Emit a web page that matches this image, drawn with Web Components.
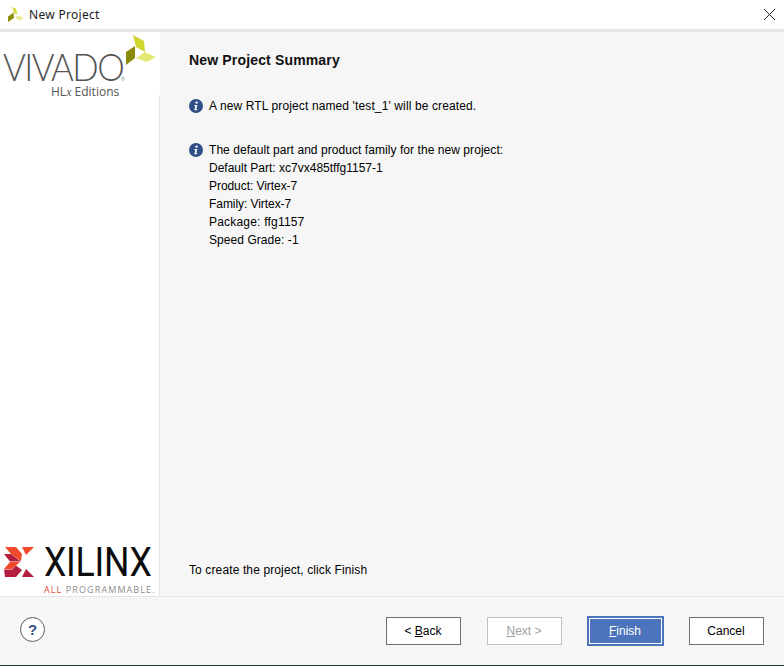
<!DOCTYPE html>
<html>
<head>
<meta charset="utf-8">
<title>New Project</title>
<style>
    html, body { margin: 0; height: 100%; }
    body {
        width: 784px;
        height: 666px;
        overflow: hidden;
        font-family: "Liberation Sans", Arial, sans-serif;
        font-size: 12px;
        color: #000;
        display: flex;
        flex-direction: column;
    }
    .w1 { letter-spacing: .12px; }
    .w2 { letter-spacing: .06px; }
    .w3 { letter-spacing: .2px; }
    .w4 { letter-spacing: -.06px; }
</style>
</head>
<body>
<project-dialog>
    <title-bar slot="title">New Project</title-bar>
    <side-panel slot="side"></side-panel>
    <summary-page slot="main" heading="New Project Summary">
        <info-note><span class="w1">A new RTL project named 'test_1' will be created.</span></info-note>
        <info-note>
            <div class="w2">The default part and product family for the new project:</div>
            <div>Default Part: xc7vx485tffg1157-1</div>
            <div class="w4">Product: Virtex-7</div>
            <div class="w4">Family: Virtex-7</div>
            <div class="w3">Package: ffg1157</div>
            <div class="w2">Speed Grade: -1</div>
        </info-note>
        <span slot="hint" class="w1">To create the project, click Finish</span>
    </summary-page>
    <button-bar slot="footer"></button-bar>
</project-dialog>

<script>
class ProjectDialog extends HTMLElement {
    constructor() {
        super()
        this.attachShadow({ mode: 'open' })
        this.shadowRoot.innerHTML = `
            <style>
                :host { display: flex; flex-direction: column; height: 666px; background: #f6f6f6; }
                .body { flex: 1; display: flex; min-height: 0; }
                .rule { height: 3px; background: #e6e6e6; }
            </style>
            <slot name="title"></slot>
            <div class="rule"></div>
            <div class="body">
                <slot name="side"></slot>
                <slot name="main"></slot>
            </div>
            <slot name="footer"></slot>
        `
    }
}

class TitleBar extends HTMLElement {
    constructor() {
        super()
        this.attachShadow({ mode: 'open' })
        this.shadowRoot.innerHTML = `
            <style>
                :host {
                    display: flex; align-items: center; height: 29px; background: #fff;
                    font-family: "Noto Sans", "Open Sans", sans-serif; font-size: 12px; letter-spacing: .3px; color: #1a1a1a;
                }
                .icon { margin-left: 8px; margin-right: 5px; width: 16px; height: 16px; }
                .label { flex: 1; }
                .close { width: 13px; height: 13px; margin-right: 8px; }
            </style>
            <svg class="icon" viewBox="0 0 16 16">
                <polygon points="4,0 8,1.5 9.5,7.5 6,6.5" fill="#d8dc50"/>
                <polygon points="0,9.5 5.5,5.5 6,11 0,15" fill="#8f8f0a"/>
                <polygon points="7,10.5 10.5,8.5 16,11 11.5,13.5" fill="#e8ec98"/>
            </svg>
            <span class="label"><slot></slot></span>
            <svg class="close" viewBox="0 0 13 13">
                <path d="M1 1L12 12M12 1L1 12" stroke="#222" stroke-width="1" fill="none"/>
            </svg>
        `
    }
}

class SidePanel extends HTMLElement {
    constructor() {
        super()
        this.attachShadow({ mode: 'open' })
        this.shadowRoot.innerHTML = `
            <style>
                :host {
                    display: flex; flex-direction: column; justify-content: space-between;
                    width: 160px; flex: none; background: #fff; overflow: hidden;
                }
                .vivado { position: relative; height: 63px; }
                .word {
                    position: absolute; left: 3px; top: 13px;
                    font-family: Lato, sans-serif; font-weight: 300; font-size: 37px; line-height: 44px;
                    letter-spacing: -1.7px; color: #555;
                    transform: scaleX(.94); transform-origin: left center;
                }
                .reg {
                    position: absolute; left: 121px; top: 44px;
                    font-family: "Liberation Sans", sans-serif; font-size: 5px; line-height: 6px; color: #777;
                }
                .hlx {
                    position: absolute; left: 51px; top: 52px;
                    font-family: "Open Sans", sans-serif; font-size: 12px; line-height: 16px; color: #555;
                }
                .hlx i { font-family: "Liberation Serif", serif; }
                .leaf { position: absolute; left: 125px; top: 3px; width: 32px; height: 32px; }
                .line { flex: 1; border-right: 1px solid #e6e6e6; }
                .xilinx { height: 50px; border-right: 1px solid #e6e6e6; position: relative; }
                .mark { position: absolute; left: 2px; top: -1px; width: 34px; height: 34px; }
                .xword {
                    position: absolute; left: 44px; top: -6px;
                    font-family: Roboto, sans-serif; font-size: 41px; line-height: 44px;
                    letter-spacing: -0.3px; color: #0c0c0c;
                    transform: scaleX(.87); transform-origin: left center;
                }
                .tag {
                    position: absolute; left: 44px; top: 38px;
                    font-family: "Open Sans", sans-serif; font-size: 9px; line-height: 12px; letter-spacing: 1.1px;
                    color: #8c8c8c; white-space: nowrap;
                }
                .tag b { font-weight: 400; color: #e04a3a; }
            </style>
            <div class="vivado">
                <span class="word">VIVADO</span>
                <span class="reg">®</span>
                <span class="hlx">HL<i>x</i> Editions</span>
                <svg class="leaf" viewBox="0 0 32 32">
                    <polygon points="8,0 19,6 20,17 11,12" fill="#cfd62f"/>
                    <polygon points="1,17 10,11 10,23 1,30" fill="#8b8b09"/>
                    <polygon points="11,23 20,17 31,22 22,27" fill="#e3ea74"/>
                </svg>
            </div>
            <div class="line"></div>
            <div class="xilinx">
                <svg class="mark" viewBox="0 0 34 34">
                    <polygon points="3,2 14,2 20,9 19,16 9,9" fill="#f04a2a"/>
                    <polygon points="2,9 9,9 19,16.5 8,16.5" fill="#b51f3f"/>
                    <polygon points="2,24 8,17 18,17 10,24" fill="#f04a2a"/>
                    <polygon points="2,24.5 10,24.5 14,20.5 20,25 14,32 3,32" fill="#b51f3f"/>
                    <polygon points="20,2 32,2 24,10" fill="#f04a2a"/>
                    <polygon points="20,32 32,32 24,24" fill="#b51f3f"/>
                </svg>
                <span class="xword">XILINX</span>
                <span class="tag"><b>ALL</b> PROGRAMMABLE.</span>
            </div>
        `
    }
}

class SummaryPage extends HTMLElement {
    constructor() {
        super()
        this.attachShadow({ mode: 'open' })
        this.shadowRoot.innerHTML = `
            <style>
                :host {
                    flex: 1; display: flex; flex-direction: column;
                    padding: 19px 0 17px 29px; min-width: 0;
                }
                h1 { margin: 0 0 28px; font-size: 14px; line-height: 18px; font-weight: bold; letter-spacing: .16px; color: #111; }
                .notes { flex: 1; display: flex; flex-direction: column; gap: 26px; }
                .hint { line-height: 18px; }
            </style>
            <h1></h1>
            <div class="notes"><slot></slot></div>
            <div class="hint"><slot name="hint"></slot></div>
        `
        this.shadowRoot.querySelector('h1').textContent = this.getAttribute('heading')
    }
}

class InfoNote extends HTMLElement {
    constructor() {
        super()
        this.attachShadow({ mode: 'open' })
        this.shadowRoot.innerHTML = `
            <style>
                :host { display: flex; gap: 6px; line-height: 18px; }
                svg { flex: none; width: 14px; height: 14px; margin-top: 2px; }
            </style>
            <svg viewBox="0 0 14 14">
                <circle cx="7" cy="7" r="7" fill="#2f4f86"/>
                <circle cx="7.6" cy="3.6" r="1.2" fill="#fff"/>
                <path d="M5.4 6h2.9l-1 4.3h1.1l-.2.9H5.3l1-4.3H5.2z" fill="#fff"/>
            </svg>
            <div><slot></slot></div>
        `
    }
}

class WizardButton extends HTMLElement {
    constructor() {
        super()
        this.attachShadow({ mode: 'open' })
        this.shadowRoot.innerHTML = `
            <style>
                :host {
                    display: flex; align-items: center; justify-content: center; box-sizing: border-box;
                    width: 75px; height: 28px; background: #fff; border: 1px solid #707070; font-size: 12px;
                    color: #000; padding-right: 1px;
                }
                :host([disabled]) { border-color: #c0c0c0; color: #a0a0a0; }
                :host([primary]) {
                    width: 77px; height: 30px; background: #4b74bd; color: #fff;
                    border: 2px solid #4b74bd; outline: 1px solid #fff; outline-offset: -3px;
                }
            </style>
            <slot></slot>
        `
    }
}

class ButtonBar extends HTMLElement {
    constructor() {
        super()
        this.attachShadow({ mode: 'open' })
        this.shadowRoot.innerHTML = `
            <style>
                :host {
                    display: flex; align-items: center; box-sizing: border-box; height: 70px;
                    padding: 0 20px; border-top: 1px solid #e4e4e4; border-bottom: 1px solid #1f3a3d;
                }
                svg { width: 25px; height: 25px; margin-right: auto; margin-bottom: 3px; }
                .next { margin-left: 26px; }
                .finish, .cancel { margin-left: 25px; }
            </style>
            <svg viewBox="0 0 25 25">
                <circle cx="12.5" cy="12.5" r="12" fill="#fff" stroke="#5d5d5d"/>
                <text x="12.5" y="17.5" text-anchor="middle" font-family="Liberation Sans" font-weight="bold" font-size="15" fill="#2f4f86">?</text>
            </svg>
            <wizard-button>&lt;&nbsp;<u>B</u>ack</wizard-button>
            <wizard-button disabled class="next"><u>N</u>ext &gt;</wizard-button>
            <wizard-button primary class="finish"><u>F</u>inish</wizard-button>
            <wizard-button class="cancel">Cancel</wizard-button>
        `
    }
}

customElements.define('project-dialog', ProjectDialog)
customElements.define('title-bar', TitleBar)
customElements.define('side-panel', SidePanel)
customElements.define('summary-page', SummaryPage)
customElements.define('info-note', InfoNote)
customElements.define('wizard-button', WizardButton)
customElements.define('button-bar', ButtonBar)
</script>
</body>
</html>
